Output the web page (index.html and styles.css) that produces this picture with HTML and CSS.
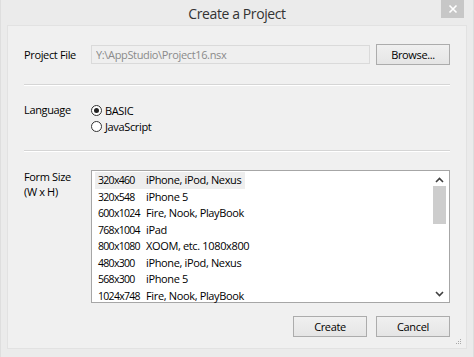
FILE: index.html
```html
<!DOCTYPE html>
<html lang="en">
<head>
    <meta charset="UTF-8">
    <title>Create a Project</title>
    <link rel="stylesheet" href="styles.css">
</head>
<body>
    <div class="window">
        <div class="titlebar">
            <span class="title">Create a Project</span>
            <button class="close" type="button">
                <svg width="10" height="10" viewBox="0 0 10 10"><path d="M1.5 1.5 L8.5 8.5 M8.5 1.5 L1.5 8.5" stroke="#fff" stroke-width="1.6"/></svg>
            </button>
        </div>

        <div class="panel">
            <div class="row row-file">
                <label class="label" for="file">Project File</label>
                <input class="file-input" id="file" type="text" value="Y:\AppStudio\Project16.nsx" disabled>
                <button class="btn browse" type="button">Browse...</button>
            </div>

            <hr class="sep">

            <div class="row row-lang">
                <span class="label">Language</span>
                <div class="radios">
                    <label class="radio checked"><span class="dot"></span>BASIC</label>
                    <label class="radio"><span class="dot"></span>JavaScript</label>
                </div>
            </div>

            <hr class="sep">

            <div class="row row-size">
                <span class="label">Form Size<br>(W x H)</span>
                <div class="listbox">
                    <ul class="items">
                        <li class="selected"><span class="dim">320x460</span>iPhone, iPod, Nexus</li>
                        <li><span class="dim">320x548</span>iPhone 5</li>
                        <li><span class="dim">600x1024</span>Fire, Nook, PlayBook</li>
                        <li><span class="dim">768x1004</span>iPad</li>
                        <li><span class="dim">800x1080</span>XOOM, etc. 1080x800</li>
                        <li><span class="dim">480x300</span>iPhone, iPod, Nexus</li>
                        <li><span class="dim">568x300</span>iPhone 5</li>
                        <li><span class="dim">1024x748</span>Fire, Nook, PlayBook</li>
                    </ul>
                    <div class="scrollbar">
                        <svg class="arrow" width="9" height="6" viewBox="0 0 9 6"><path d="M1 5 L4.5 1.5 L8 5" fill="none" stroke="#404040" stroke-width="1.6"/></svg>
                        <div class="track"><div class="thumb"></div></div>
                        <svg class="arrow" width="9" height="6" viewBox="0 0 9 6"><path d="M1 1 L4.5 4.5 L8 1" fill="none" stroke="#404040" stroke-width="1.6"/></svg>
                    </div>
                </div>
            </div>

            <div class="actions">
                <button class="btn" type="button">Create</button>
                <button class="btn" type="button">Cancel</button>
            </div>

            <svg class="grip" width="6" height="6" viewBox="0 0 6 6">
                <rect x="4" y="0" width="1" height="1" fill="#a8a8a8"/>
                <rect x="2" y="2" width="1" height="1" fill="#a8a8a8"/>
                <rect x="4" y="2" width="1" height="1" fill="#a8a8a8"/>
                <rect x="0" y="4" width="1" height="1" fill="#a8a8a8"/>
                <rect x="2" y="4" width="1" height="1" fill="#a8a8a8"/>
                <rect x="4" y="4" width="1" height="1" fill="#a8a8a8"/>
            </svg>
        </div>
    </div>
</body>
</html>
```

FILE: styles.css
```css
body {
    margin: 0;
    background: #ebebeb;
    font-family: "Open Sans", "Noto Sans", sans-serif;
    font-size: 11px;
    letter-spacing: -0.35px;
    color: #000;
}
.window {
    width: 474px;
    height: 357px;
    box-sizing: border-box;
    border-left: 1px solid #dedede;
    border-right: 1px solid #dedede;
}
.titlebar {
    position: relative;
    height: 25px;
    display: flex;
    align-items: center;
    justify-content: center;
}
.title {
    font-size: 14px;
    letter-spacing: -0.4px;
    color: #333;
    margin-top: 1px;
}
.close {
    position: absolute;
    top: 0;
    right: 9px;
    width: 23px;
    height: 18px;
    border: none;
    padding: 0;
    background: #c7c7c7;
    display: flex;
    align-items: center;
    justify-content: center;
}
.panel {
    position: relative;
    margin: 0 6px 0 6px;
    height: 324px;
    box-sizing: border-box;
    background: #f0f0f0;
    border: 1px solid #e2e2e2;
    padding: 18px 16px 0 16px;
}
.row {
    display: flex;
}
.label {
    width: 67px;
    flex: none;
}
.row-file {
    align-items: center;
    height: 21px;
}
.file-input {
    width: 279px;
    height: 19px;
    box-sizing: border-box;
    border: 1px solid #dadada;
    background: #efefef;
    font: inherit;
    letter-spacing: inherit;
    color: #8a8a8a;
    padding: 0 4px;
    margin: 0;
}
.btn {
    width: 74px;
    height: 21px;
    box-sizing: border-box;
    border: 1px solid #acacac;
    background: linear-gradient(#f0f0f0, #e5e5e5);
    font: inherit;
    letter-spacing: inherit;
    color: #000;
    padding: 0;
}
.browse {
    margin-left: 6px;
}
.sep {
    margin: 0;
    border: none;
    border-top: 1px solid #d5d5d5;
    border-bottom: 1px solid #fff;
    width: 426px;
}
.row-file + .sep {
    margin-top: 19px;
}
.row-lang {
    margin-top: 16px;
    height: 32px;
}
.row-lang .label {
    line-height: 16px;
}
.radios {
    display: flex;
    flex-direction: column;
}
.radio {
    display: flex;
    align-items: center;
    height: 16px;
}
.dot {
    width: 11px;
    height: 11px;
    box-sizing: border-box;
    border: 1px solid #333;
    border-radius: 50%;
    background: #fff;
    margin-right: 3px;
    display: flex;
    align-items: center;
    justify-content: center;
}
.checked .dot::after {
    content: "";
    width: 5px;
    height: 5px;
    border-radius: 50%;
    background: #222;
}
.row-lang + .sep {
    margin-top: 16px;
}
.row-size {
    margin-top: 18px;
}
.row-size .label {
    line-height: 15px;
    margin-top: -1px;
}
.listbox {
    display: flex;
    width: 359px;
    height: 133px;
    box-sizing: border-box;
    border: 1px solid #a6a6a6;
    background: #fff;
}
.items {
    flex: 1;
    list-style: none;
    margin: 0;
    padding: 1px 0 0 3px;
}
.items li {
    height: 16.5px;
    line-height: 16px;
    padding-left: 3px;
    white-space: nowrap;
}
.items .selected {
    background: #eeeeee;
    width: 147px;
}
.dim {
    display: inline-block;
    width: 48px;
    font-size: 10.5px;
    letter-spacing: -0.7px;
}
.scrollbar {
    width: 15px;
    display: flex;
    flex-direction: column;
    align-items: center;
    padding: 6px 0 5px;
    margin-right: 2px;
}
.track {
    flex: 1;
    width: 13px;
    padding-top: 3px;
}
.thumb {
    height: 38px;
    background: #cdcdcd;
}
.actions {
    display: flex;
    justify-content: flex-end;
    gap: 9px;
    margin-top: 13px;
    width: 426px;
}
.actions .btn {
    height: 21px;
}
.grip {
    position: absolute;
    right: 4px;
    bottom: 3px;
}
```
